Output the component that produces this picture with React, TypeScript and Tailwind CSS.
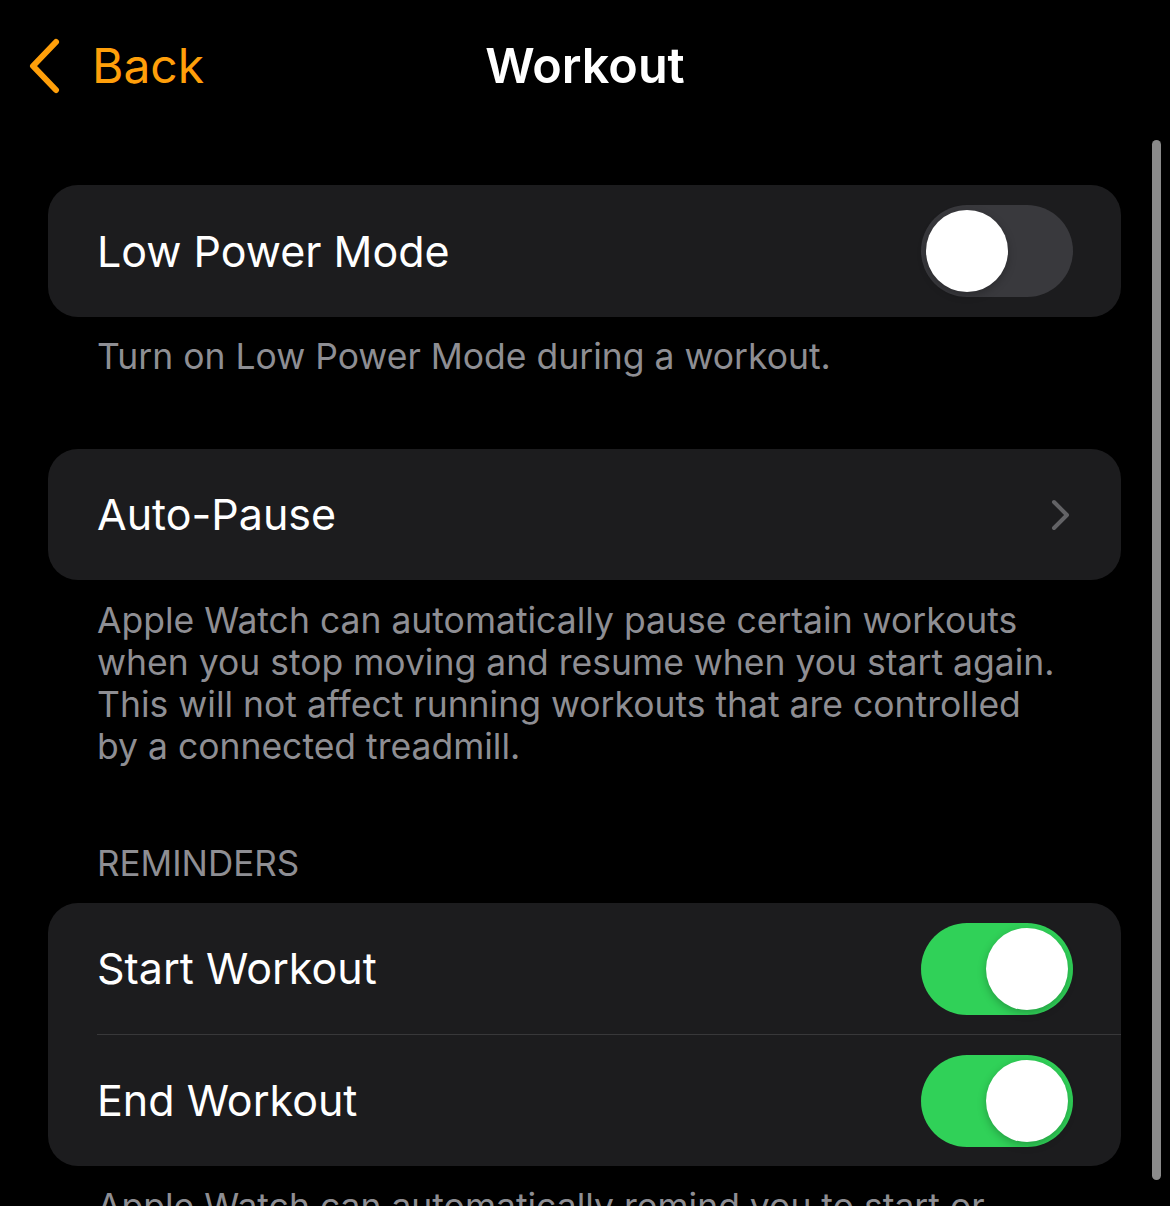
import React, { useState } from 'react';

type ToggleProps = {
    on: boolean;
    onChange: () => void;
};

function Toggle({ on, onChange }: ToggleProps) {
    return (
        <button
            onClick={onChange}
            className={`flex h-[92px] w-[152px] shrink-0 items-center rounded-full p-[5px] ${on ? 'justify-end bg-[#30D158]' : 'justify-start bg-[#39393D]'}`}
        >
            <span className="block h-[82px] w-[82px] rounded-full bg-white shadow-[0_3px_8px_rgba(0,0,0,0.25)]" />
        </button>
    );
}

function Footnote({ children, className = '' }: { children: React.ReactNode; className?: string }) {
    return <p className={`whitespace-nowrap px-[49px] text-[35.5px] leading-[42px] text-[#8E8E93] ${className}`}>{children}</p>;
}

function App() {
    const [lowPower, setLowPower] = useState(false);
    const [startReminder, setStartReminder] = useState(true);
    const [endReminder, setEndReminder] = useState(true);

    return (
        <div className="relative h-[1206px] w-[1170px] overflow-hidden bg-black font-['Inter','Liberation_Sans',sans-serif] text-white">
            <header className="grid h-[132px] grid-cols-3 items-center">
                <button className="flex items-center gap-[30px] pl-[28px] text-[48px] text-[#FF9F0A]">
                    <svg width="34" height="56" viewBox="0 0 34 56" fill="none">
                        <path d="M28 4 L5 28 L28 52" stroke="#FF9F0A" strokeWidth="6" strokeLinecap="round" strokeLinejoin="round" />
                    </svg>
                    <span>Back</span>
                </button>
                <h1 className="text-center text-[48.5px] font-semibold">Workout</h1>
                <div />
            </header>

            <main className="pl-[48px] pr-[49px] pt-[53px]">
                <section className="flex h-[132px] items-center justify-between rounded-[30px] bg-[#1C1C1E] pl-[49px] pr-[48px]">
                    <span className="text-[43px]">Low Power Mode</span>
                    <Toggle on={lowPower} onChange={() => setLowPower(!lowPower)} />
                </section>
                <Footnote className="mt-[19px]">Turn on Low Power Mode during a workout.</Footnote>

                <section className="mt-[71px] flex h-[131px] items-center justify-between rounded-[30px] bg-[#1C1C1E] pl-[49px] pr-[50px]">
                    <span className="text-[43px]">Auto-Pause</span>
                    <svg width="20" height="32" viewBox="0 0 20 32" fill="none">
                        <path d="M3 3 L16 16 L3 29" stroke="#636366" strokeWidth="4" strokeLinecap="round" strokeLinejoin="round" />
                    </svg>
                </section>
                <Footnote className="mt-[20px]">
                    Apple Watch can automatically pause certain workouts
                    <br />
                    when you stop moving and resume when you start again.
                    <br />
                    This will not affect running workouts that are controlled
                    <br />
                    by a connected treadmill.
                </Footnote>

                <h2 className="mt-[74px] px-[49px] text-[35px] leading-[42px] text-[#8E8E93]">REMINDERS</h2>
                <section className="mt-[19px] rounded-[30px] bg-[#1C1C1E]">
                    <div className="flex h-[131px] items-center justify-between pl-[49px] pr-[48px]">
                        <span className="text-[43px]">Start Workout</span>
                        <Toggle on={startReminder} onChange={() => setStartReminder(!startReminder)} />
                    </div>
                    <div className="ml-[49px] h-px bg-[#38383A]" />
                    <div className="flex h-[131px] items-center justify-between pl-[49px] pr-[48px]">
                        <span className="text-[43px]">End Workout</span>
                        <Toggle on={endReminder} onChange={() => setEndReminder(!endReminder)} />
                    </div>
                </section>
                <Footnote className="mt-[20px]">
                    Apple Watch can automatically remind you to start or
                    <br />
                    end a workout when it detects that you may be exercising.
                </Footnote>
            </main>

            {/* scroll indicator */}
            <div className="absolute left-[1152px] top-[140px] h-[1040px] w-[9px] rounded-full bg-[#8A8A8A]" />
        </div>
    );
}

export default App;
